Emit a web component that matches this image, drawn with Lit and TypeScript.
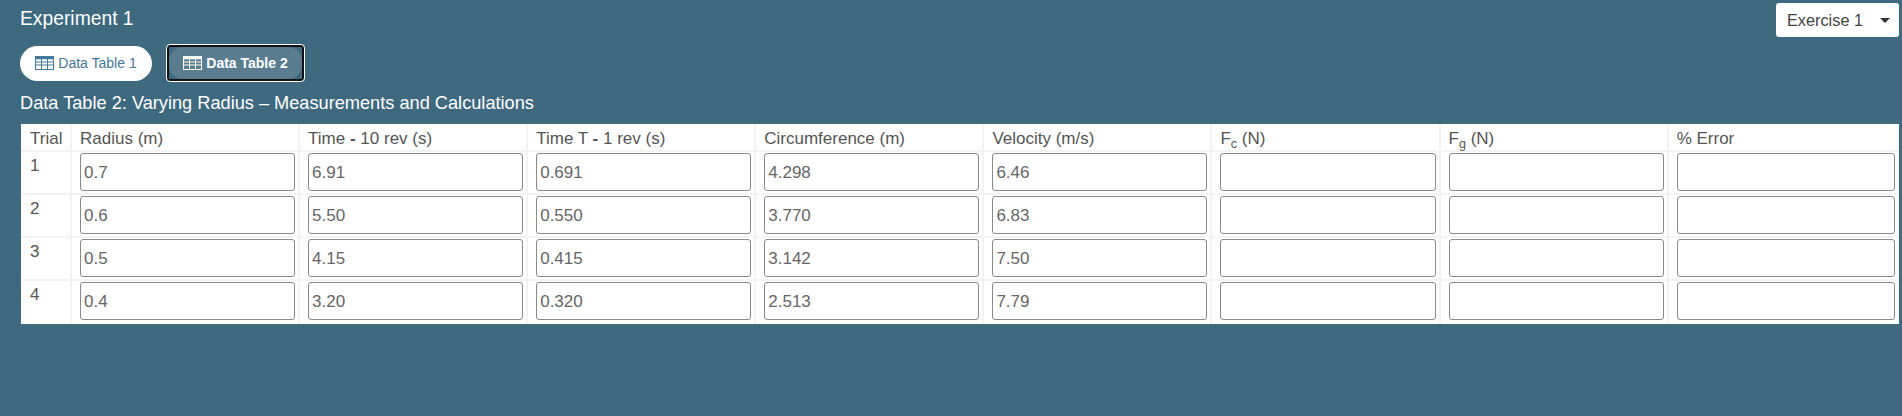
import { LitElement, html, css, svg } from "lit";
import { customElement } from "lit/decorators.js";

const rows = [
  ["0.7", "6.91", "0.691", "4.298", "6.46"],
  ["0.6", "5.50", "0.550", "3.770", "6.83"],
  ["0.5", "4.15", "0.415", "3.142", "7.50"],
  ["0.4", "3.20", "0.320", "2.513", "7.79"],
];

const tableIcon = svg`<svg class="ico" viewBox="0 0 19 14" width="19" height="14" aria-hidden="true">
  <path fill="currentColor" fill-rule="evenodd" d="M0 0h19v14H0zM1 3.2v2.2h5V3.2zM7 3.2v2.2h5V3.2zM13 3.2v2.2h5V3.2zM1 6.4v2.2h5V6.4zM7 6.4v2.2h5V6.4zM13 6.4v2.2h5V6.4zM1 9.6V13h5V9.6zM7 9.6V13h5V9.6zM13 9.6V13h5V9.6z"/>
</svg>`;

@customElement("app-root")
export class AppRoot extends LitElement {
  static styles = css`
    :host {
      display: block;
      min-height: 416px;
      box-sizing: border-box;
      background: #3e697f;
      font-family: "Liberation Sans", Arial, sans-serif;
      padding: 3px 3px 0 20px;
      color: #fff;
    }
    .top { display: flex; justify-content: space-between; align-items: flex-start; height: 41px; }
    h1 { margin: 4px 0 0; font-size: 19.3px; line-height: 24px; font-weight: 400; }
    .select {
      display: flex; align-items: center; box-sizing: border-box;
      width: 123px; height: 34px; padding-left: 11px;
      background: #fff; border-radius: 3px; color: #444; font-size: 16.3px;
    }
    .caret {
      width: 0; height: 0; margin-left: 17px;
      border-left: 5px solid transparent; border-right: 5px solid transparent;
      border-top: 5px solid #333;
    }
    .tabs { display: flex; align-items: center; gap: 14px; height: 38px; }
    .tab {
      display: flex; align-items: center; justify-content: center; gap: 4px;
      box-sizing: border-box; font-size: 14px;
      font-family: inherit; border: 0; padding: 0;
    }
    .tab.one { width: 132px; height: 35px; border-radius: 18px; background: #fff; color: #44799a; }
    .tab.two {
      width: 139px; height: 38px; border-radius: 4px;
      background: #3e697f; color: #fff; font-weight: 700;
      border: 1px solid #fff; padding: 2px; background-clip: padding-box;
      box-shadow: inset 0 0 0 2px #111;
    }
    .pill {
      display: flex; align-items: center; justify-content: center; gap: 4px;
      width: 100%; height: 100%; border-radius: 14px; background: #5a7c8f;
    }
    .ico { display: block; flex: none; }
    h2 { margin: 10px 0 0; font-size: 18.2px; line-height: 22px; font-weight: 400; }
    .wrap { margin: 10px 0 0 1px; background: #fff; }
    table {
      width: 100%; border-collapse: collapse; table-layout: fixed;
      color: #555; font-size: 17px;
    }
    col.first { width: 50px; }
    col.data { width: 228.1px; }
    th, td {
      border: 2px solid #f3f3f3; text-align: left; font-weight: 400;
      padding: 0 3px 0 8px; vertical-align: top;
    }
    tr > :first-child { border-left: 0; padding-left: 9px; padding-right: 0; }
    tr > :last-child { border-right: 0; padding-right: 4px; }
    tr:first-child th { border-top: 0; }
    tbody tr:last-child td { border-bottom: 0; }
    th { height: 27px; line-height: 23px; padding-top: 3px; padding-bottom: 0; box-sizing: border-box; color: #555; }
    td { height: 43px; box-sizing: border-box; padding-top: 1px; line-height: 24px; }
    tbody tr:last-child td { height: 44px; }
    sub { font-size: 12.5px; line-height: 0; vertical-align: -4px; }
    .num { display: block; padding-top: 1px; }
    input {
      display: block; width: 100%; height: 38px; box-sizing: border-box;
      margin: 0; border: 1px solid #8a8a8a; border-radius: 3px; background: #fff;
      padding: 2px 2px 0 3px; font: 17px "Liberation Sans", Arial, sans-serif;
      color: #666;
    }
  `;

  render() {
    const heads = [
      html`Radius (m)`,
      html`Time <b>-</b> 10 rev (s)`,
      html`Time T <b>-</b> 1 rev (s)`,
      html`Circumference (m)`,
      html`Velocity (m/s)`,
      html`F<sub>c</sub> (N)`,
      html`F<sub>g</sub> (N)`,
      html`% Error`,
    ];
    return html`
      <div class="top">
        <h1>Experiment 1</h1>
        <div class="select">Exercise 1<span class="caret"></span></div>
      </div>
      <div class="tabs">
        <button class="tab one">${tableIcon}<span>Data Table 1</span></button>
        <button class="tab two"><span class="pill">${tableIcon}<span>Data Table 2</span></span></button>
      </div>
      <h2>Data Table 2: Varying Radius – Measurements and Calculations</h2>
      <div class="wrap">
        <table>
          <colgroup>
            <col class="first" />
            ${[0, 1, 2, 3, 4, 5, 6].map(() => html`<col class="data" />`)}
            <col />
          </colgroup>
          <thead>
            <tr><th>Trial</th>${heads.map((h) => html`<th>${h}</th>`)}</tr>
          </thead>
          <tbody>
            ${rows.map(
              (r, i) => html`<tr>
                <td><span class="num">${i + 1}</span></td>
                ${[0, 1, 2, 3, 4, 5, 6, 7].map(
                  (c) => html`<td><input type="text" .value=${r[c] ?? ""} /></td>`
                )}
              </tr>`
            )}
          </tbody>
        </table>
      </div>
    `;
  }
}
